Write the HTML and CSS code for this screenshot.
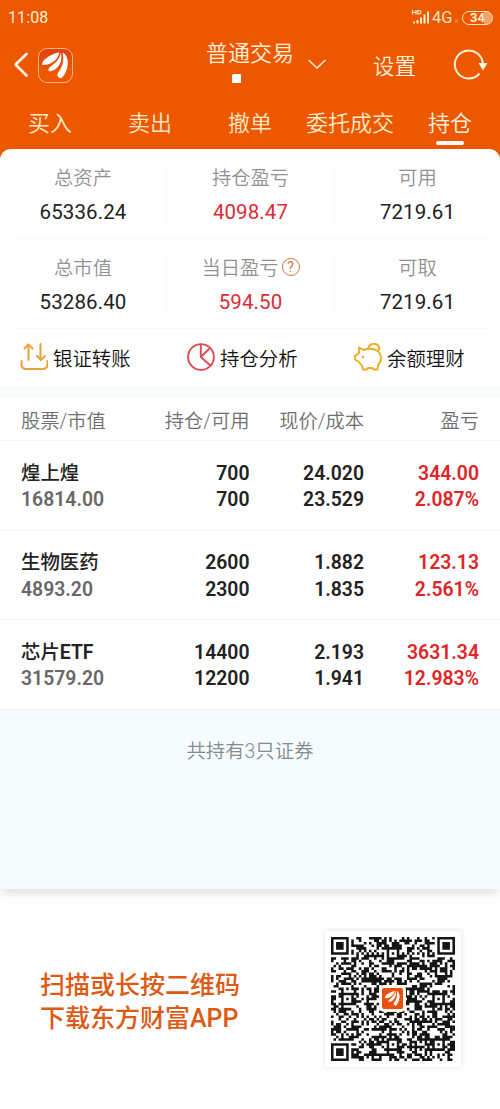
FILE: index.html
```html
<!DOCTYPE html>
<html lang="zh-CN">
<head>
<meta charset="utf-8">
<title>普通交易</title>
<link rel="stylesheet" href="styles.css">
</head>
<body>
<svg width="0" height="0" class="defs">
  <symbol id="feathers" viewBox="0 0 36 36">
    <path d="M3.500 17.500Q3 13 8 10Q13 5.500 22.500 3.500Q20 12 14 15Q10 17.500 4 17.500Z"/>
    <path d="M10 23.500Q10.500 20 15.500 17Q22 12 24 4Q25.500 12 22 17.500Q19 23 12 24.500Z"/>
    <path d="M20 28.500Q20 26 23.500 22Q28 14 25.800 3.500Q32 8 31.500 16Q30.500 26 24.500 32Q20.500 31 20 28.500Z"/>
  </symbol>
</svg>
<header class="header">
  <div class="status">
    <span class="time">11:08</span>
    <div class="signals">
      <svg width="20" height="15" viewBox="0 0 20 15"><g stroke="#ffebc8" fill="none" stroke-width="1.200"><path d="M1.500 0v4.500M5 0v4.500M1.500 2.300h3.500M6.800 .5h1.700q1.300 0 1.300 1.700t-1.300 1.700H6.800z"/><path d="M3 11.500v2M6.500 10v3.500M10 7.500v6M13.500 4.500v9M17 1.500v12" stroke-width="2"/></g></svg>
      <span class="net">4G</span><span class="carrier">it</span>
      <span class="battery">34</span>
    </div>
  </div>
  <div class="bar">
    <svg class="back" width="18" height="28" viewBox="0 0 18 28"><path d="M14.500 3L3.500 13.500L14.500 24.500" fill="none" stroke="#fff8e8" stroke-width="2.700" stroke-linecap="round" stroke-linejoin="round"/></svg>
    <span class="logo"><svg width="33" height="33"><use href="#feathers"/></svg></span>
    <div class="title"><span>普通交易</span><i class="marker"></i></div>
    <svg class="chevron" width="20" height="14" viewBox="0 0 20 14"><path d="M1.500 2L10 10L18.500 2" fill="none" stroke="#fff0cf" stroke-width="1.500"/></svg>
    <span class="settings">设置</span>
    <svg class="refresh" width="36" height="34" viewBox="0 0 36 34"><path d="M29.800 17A14 14 0 1 0 26.500 25.500" fill="none" stroke="#fff1d8" stroke-width="2"/><path d="M25.500 15H34.500L30 22.500Z" fill="#fff8e8"/></svg>
  </div>
  <nav class="tabs"><span>买入</span><span>卖出</span><span>撤单</span><span>委托成交</span><span class="active">持仓</span></nav>
</header>
<main class="sheet">
  <section class="summary">
    <div class="cell"><span class="label">总资产</span><span class="value">65336.24</span></div>
    <div class="cell"><span class="label">持仓盈亏</span><span class="value up">4098.47</span></div>
    <div class="cell"><span class="label">可用</span><span class="value">7219.61</span></div>
  </section>
  <section class="summary">
    <div class="cell"><span class="label">总市值</span><span class="value">53286.40</span></div>
    <div class="cell"><span class="label">当日盈亏<span class="help">?</span></span><span class="value up">594.50</span></div>
    <div class="cell"><span class="label">可取</span><span class="value">7219.61</span></div>
  </section>
  <section class="actions">
    <div class="action"><svg width="28" height="28" viewBox="0 0 28 28"><g fill="none" stroke="#e8a33a" stroke-width="2" stroke-linecap="round" stroke-linejoin="round"><path d="M1.500 18v3q0 5 5 5h16q5 0 5-5v-3M8.500 17V2M4.500 5.500l4-4l4 4M20.500 1v16M17 13l4 4l4-4"/></g></svg>银证转账</div>
    <div class="action"><svg width="28" height="28" viewBox="0 0 28 28"><g fill="none" stroke="#e04a50" stroke-width="1.900"><circle cx="14" cy="14" r="12.900"/><path d="M13.800 1V14L23.500 22.500M13.800 14L22.500 5.500"/></g></svg>持仓分析</div>
    <div class="action"><svg width="28" height="28" viewBox="0 0 28 28"><g fill="none" stroke="#efab22" stroke-width="1.900" stroke-linejoin="round"><path d="M5 4.500L9.500 7Q16 4.500 22 7Q27 10 27 15Q27 19 24 22L23.500 26.500H19.500L18.500 25H14L13 26.500H9L8 23L5 19L1 16.500V13L5 10Z"/><path d="M14.500 5.500C15 0 23 -1 25 4Q26 7 23 8"/></g><circle cx="9" cy="14" r="1.300" fill="#efab22"/></svg>余额理财</div>
  </section>
  <section class="table">
    <div class="row head"><span>股票/市值</span><span>持仓/可用</span><span>现价/成本</span><span>盈亏</span></div>
    <div class="row"><div><b>煌上煌</b><b class="muted">16814.00</b></div><div><b>700</b><b>700</b></div><div><b>24.020</b><b>23.529</b></div><div class="gain"><b>344.00</b><b>2.087%</b></div></div>
    <div class="row"><div><b>生物医药</b><b class="muted">4893.20</b></div><div><b>2600</b><b>2300</b></div><div><b>1.882</b><b>1.835</b></div><div class="gain"><b>123.13</b><b>2.561%</b></div></div>
    <div class="row"><div><b>芯片<strong>ETF</strong></b><b class="muted">31579.20</b></div><div><b>14400</b><b>12200</b></div><div><b>2.193</b><b>1.941</b></div><div class="gain"><b>3631.34</b><b>12.983%</b></div></div>
  </section>
  <p class="total">共持有3只证券</p>
</main>
<footer class="promo">
  <div class="pitch">扫描或长按二维码<br>下载东方财富APP</div>
  <div class="qr">
    <svg id="code" width="124" height="124" viewBox="0 0 49 49" shape-rendering="geometricPrecision"></svg>
    <span class="badge"><svg width="19" height="19"><use href="#feathers"/></svg></span>
  </div>
</footer>
<script src="qr.js"></script>
</body>
</html>
```
FILE: styles.css
```css
* { box-sizing: border-box; }
body { margin: 0; width: 500px; height: 1109px; overflow: hidden; background: #fefefe; color: #222; font-family: Roboto, "Noto Sans CJK SC", sans-serif; }
svg { display: block; flex: none; }
.defs { position: absolute; }
.header { height: 159px; background: #ed5700; color: #ffe9c4; }
.status { height: 35px; padding: 0 7px 0 8px; display: flex; align-items: center; justify-content: space-between; }
.time { font-size: 16px; letter-spacing: .1px; color: #fff1d0; }
.signals { display: flex; align-items: center; }
.signals svg { margin-right: 1px; }
.net { font-size: 16.500px; color: #ffe6bd; }
.carrier { font-size: 6px; margin: 6px 4px 0 2px; color: #f8a365; }
.battery { width: 31px; height: 14px; border: 1.500px solid #ffe6bd; border-radius: 7px; font-size: 13px; font-weight: 700; line-height: 12px; text-align: center; color: #fff1d0; background: linear-gradient(90deg, transparent 72%, #f3a36a 72%); }
.bar { height: 60px; display: flex; align-items: center; }
.back { margin-left: 12px; }
.logo { width: 35px; height: 35px; margin-left: 8px; border: 1px solid #ffb680; border-radius: 9px; background: linear-gradient(#e33f16, #ed5700 65%); fill: #fff; }
.title { width: 88px; height: 60px; margin-left: 133px; padding-top: 1px; font-size: 22px; line-height: 36px; font-weight: 350; color: #fff1d8; white-space: nowrap; }
.title span { display: block; }
.marker { display: block; width: 9px; height: 9px; margin: 2px 0 0 26px; border-radius: 2px 1px 0 0; background: #fff; }
.chevron { margin-left: 13px; }
.settings { margin-left: 46px; padding-bottom: 2px; font-size: 21.500px; font-weight: 350; color: #fff1d8; }
.refresh { margin-left: 37px; }
.tabs { height: 54px; padding-top: 1px; display: grid; grid-template-columns: repeat(5, 1fr); justify-items: center; font-size: 22px; line-height: 56px; font-weight: 350; }
.tabs span { white-space: nowrap; }
.active { color: #fff4e2; }
.active::after { content: ""; display: block; width: 28px; height: 4px; margin: -11px auto 0; border-radius: 2px; background: #fff; }
.sheet { position: relative; height: 740px; margin-top: -10px; border-radius: 11px 11px 0 0; background: #fefefe; box-shadow: 0 7px 7px -2px #e4e6e3; display: flex; flex-direction: column; }
.summary { height: 90px; margin: 0 14px; padding-top: 14px; border-bottom: 1px solid #f6f6f6; display: grid; grid-template-columns: 152px 168px 152px; }
.cell { display: flex; flex-direction: column; align-items: center; height: 64px; }
.cell + .cell { border-left: 1px solid #f8f8f8; }
.label { height: 30px; padding-top: 1px; line-height: 30px; font-size: 19.300px; font-weight: 350; color: #929292; display: flex; align-items: center; }
.cell:first-child { padding-right: 14px; }
.cell:last-child { padding-left: 14px; }
.value { height: 38px; line-height: 38px; font-size: 20.500px; letter-spacing: .1px; }
.up { color: #da2c38; }
.help { width: 18px; height: 18px; margin: -3px 0 0 3px; border: 1.300px solid #da7140; border-radius: 50%; color: #da7140; font-size: 14px; line-height: 16px; text-align: center; font-weight: 400; }
.actions { height: 57px; padding-left: 20px; display: grid; grid-template-columns: 167px 167px 1fr; font-size: 19.400px; font-weight: 350; color: #111; }
.action { display: flex; align-items: center; gap: 5px; padding-bottom: 1px; white-space: nowrap; }
.table { border-top: 12px solid #f6fbfc; }
.row { height: 89.500px; padding: 19.500px 21px 0; border-bottom: 1px solid #f4f4f4; display: grid; grid-template-columns: 114px 114.500px 114.500px 115px; }
.row > :not(:first-child) { text-align: right; }
.row.head { height: 43px; padding-top: 1px; line-height: 45px; font-size: 19.300px; font-weight: 350; color: #707070; white-space: nowrap; }
.row b { display: block; height: 26.500px; line-height: 26px; font-size: 19.400px; font-weight: 600; white-space: nowrap; }
.row > div:first-child b:first-child { font-weight: 500; }
.row strong { font-weight: 600; }
.row .muted { color: #686868; }
.gain { color: #df2527; }
.total { flex: 1; margin: 0; background: #f6fcfe; text-align: center; line-height: 83px; font-size: 19.400px; font-weight: 350; color: #858c8f; }
.promo { position: relative; height: 220px; padding: 42px 39px 0 40px; display: flex; justify-content: space-between; }
.pitch { padding-top: 39px; font-size: 25px; line-height: 32.500px; font-weight: 500; color: #dd5914; white-space: nowrap; }
.qr { position: relative; width: 136px; height: 136px; padding: 6px; background: #fff; box-shadow: 0 0 5px 1px #ececec; }
.badge { position: absolute; left: 54px; top: 54px; width: 27px; height: 27px; padding: 1px; border: 3px solid #fff8ef; border-radius: 5px; background: #e65010; fill: #fff8ef; }
```
FILE: qr.js
```js
const size = 49;
let seed = 8219;
function random() {
  seed = (seed * 1103515245 + 12345) % 2147483648;
  return seed / 2147483648;
}
const grid = Array.from({ length: size }, () => Array.from({ length: size }, () => random() < 0.52));
for (let i = 0; i < size; i++) grid[6][i] = grid[i][6] = i % 2 === 0;

// Concentric square markers around a centre module.
function marker(cx, cy, radius, rings) {
  for (let y = -radius; y <= radius; y++) {
    for (let x = -radius; x <= radius; x++) {
      const row = grid[cy + y];
      if (row && cx + x >= 0 && cx + x < size) row[cx + x] = rings.includes(Math.max(Math.abs(x), Math.abs(y)));
    }
  }
}
[[6, 24], [24, 6], [42, 24], [24, 42], [42, 42]].forEach(([x, y]) => marker(x, y, 2, [0, 2]));
[[3, 3], [45, 3], [3, 45]].forEach(([x, y]) => marker(x, y, 4, [0, 1, 3]));

let d = "";
grid.forEach((row, y) => row.forEach((on, x) => { if (on) d += `M${x} ${y}h1v1h-1z`; }));
const path = document.createElementNS("http://www.w3.org/2000/svg", "path");
path.setAttribute("d", d);
path.setAttribute("fill", "#151515");
document.getElementById("code").append(path);
```
